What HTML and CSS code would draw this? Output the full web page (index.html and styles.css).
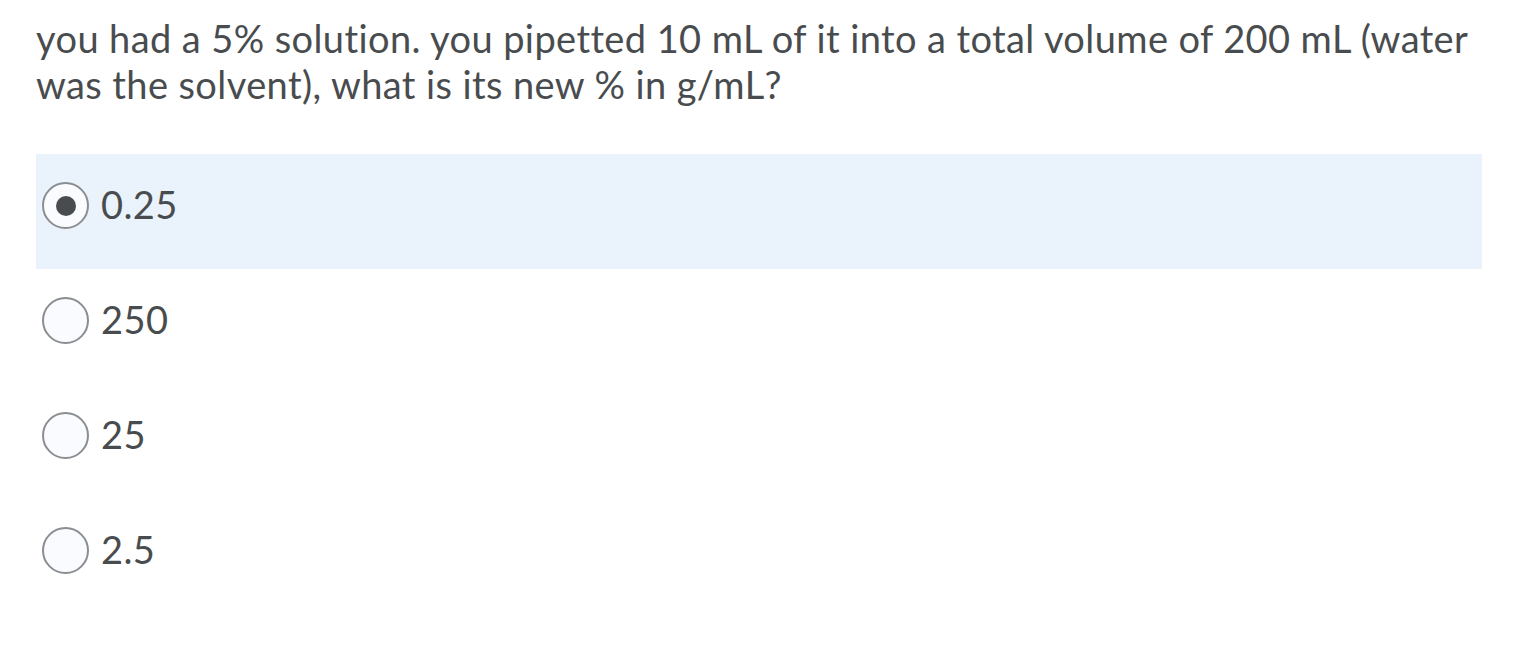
FILE: index.html
```html
<!DOCTYPE html>
<html>
<head>
<meta charset="utf-8">
<link rel="stylesheet" href="styles.css">
</head>
<body>
<div class="page">
  <p class="question">you had a 5% solution. you pipetted 10 mL of it into a total volume of 200 mL (water was the solvent), what is its new % in g/mL?</p>
  <div class="options">
    <label class="option selected"><span class="radio"><span class="dot"></span></span><span class="text">0.25</span></label>
    <label class="option"><span class="radio"></span><span class="text">250</span></label>
    <label class="option"><span class="radio"></span><span class="text">25</span></label>
    <label class="option"><span class="radio"></span><span class="text">2.5</span></label>
  </div>
</div>
</body>
</html>
```

FILE: styles.css
```css
html, body {
  margin: 0;
  padding: 0;
  background: #ffffff;
}
.page {
  padding: 15px 42px 0 36px;
  font-family: Lato, "Liberation Sans", sans-serif;
  color: #494c4e;
  font-variant-ligatures: none;
}
.question {
  margin: 0;
  font-size: 38px;
  line-height: 46px;
  letter-spacing: 0.4px;
}
.options {
  margin-top: 47px;
  display: flex;
  flex-direction: column;
}
.option {
  display: flex;
  height: 115px;
  box-sizing: border-box;
  padding: 28px 0 0 6px;
  align-items: flex-start;
  gap: 12px;
}
.option.selected {
  background: #eaf2fc;
}
.radio {
  width: 47px;
  height: 47px;
  box-sizing: border-box;
  border: 2px solid #8b8e91;
  border-radius: 50%;
  background: #f9fbff;
  display: flex;
  align-items: center;
  justify-content: center;
  flex: none;
}
.dot {
  width: 20px;
  height: 20px;
  border-radius: 50%;
  background: #494c4e;
}
.text {
  font-size: 38px;
  line-height: 45px;
  letter-spacing: 0.4px;
}
```
